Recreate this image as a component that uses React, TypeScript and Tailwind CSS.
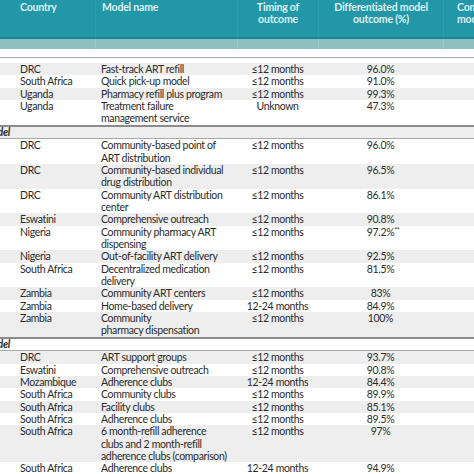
type Row = {
  country: string;
  model: string[];
  timing: string;
  outcome: string;
  note?: string;
  shaded?: boolean;
};

const COLS = "grid grid-cols-[95px_142px_81px_125px_1fr]";
const FONT = { fontFamily: "Lato, 'Liberation Sans', sans-serif" };

const section1: Row[] = [
  { country: "DRC", model: ["Fast-track ART refill"], timing: "≤12 months", outcome: "96.0%", shaded: true },
  { country: "South Africa", model: ["Quick pick-up model"], timing: "≤12 months", outcome: "91.0%" },
  { country: "Uganda", model: ["Pharmacy refill plus program"], timing: "≤12 months", outcome: "99.3%", shaded: true },
  { country: "Uganda", model: ["Treatment failure", "management service"], timing: "Unknown", outcome: "47.3%" },
];

const section2: Row[] = [
  { country: "DRC", model: ["Community-based point of", "ART distribution"], timing: "≤12 months", outcome: "96.0%" },
  { country: "DRC", model: ["Community-based individual", "drug distribution"], timing: "≤12 months", outcome: "96.5%", shaded: true },
  { country: "DRC", model: ["Community ART distribution", "center"], timing: "≤12 months", outcome: "86.1%" },
  { country: "Eswatini", model: ["Comprehensive outreach"], timing: "≤12 months", outcome: "90.8%", shaded: true },
  { country: "Nigeria", model: ["Community pharmacy ART", "dispensing"], timing: "≤12 months", outcome: "97.2%", note: "**" },
  { country: "Nigeria", model: ["Out-of-facility ART delivery"], timing: "≤12 months", outcome: "92.5%", shaded: true },
  { country: "South Africa", model: ["Decentralized medication", "delivery"], timing: "≤12 months", outcome: "81.5%" },
  { country: "Zambia", model: ["Community ART centers"], timing: "≤12 months", outcome: "83%", shaded: true },
  { country: "Zambia", model: ["Home-based delivery"], timing: "12-24 months", outcome: "84.9%" },
  { country: "Zambia", model: ["Community", "pharmacy dispensation"], timing: "≤12 months", outcome: "100%", shaded: true },
];

const section3: Row[] = [
  { country: "DRC", model: ["ART support groups"], timing: "≤12 months", outcome: "93.7%", shaded: true },
  { country: "Eswatini", model: ["Comprehensive outreach"], timing: "≤12 months", outcome: "90.8%" },
  { country: "Mozambique", model: ["Adherence clubs"], timing: "12-24 months", outcome: "84.4%", shaded: true },
  { country: "South Africa", model: ["Community clubs"], timing: "≤12 months", outcome: "89.9%" },
  { country: "South Africa", model: ["Facility clubs"], timing: "≤12 months", outcome: "85.1%", shaded: true },
  { country: "South Africa", model: ["Adherence clubs"], timing: "≤12 months", outcome: "89.5%" },
  {
    country: "South Africa",
    model: ["6 month-refill adherence", "clubs and 2 month-refill", "adherence clubs (comparison)"],
    timing: "≤12 months",
    outcome: "97%",
    shaded: true,
  },
  { country: "South Africa", model: ["Adherence clubs"], timing: "12-24 months", outcome: "94.9%" },
];

function DataRow({ row }: { row: Row }) {
  return (
    <div
      className={`${COLS} text-[10.5px] leading-[12.35px] tracking-[-0.35px] text-[#2b2b2b] ${
        row.shaded ? "bg-[#eeeeee]" : "bg-white"
      }`}
    >
      <div className="pl-[20px] whitespace-nowrap">{row.country}</div>
      <div className="pl-[6px] whitespace-nowrap">
        {row.model.map((line) => (
          <div key={line}>{line}</div>
        ))}
      </div>
      <div className="text-center whitespace-nowrap">{row.timing}</div>
      <div className="text-center whitespace-nowrap">
        {row.outcome}
        {row.note && <span className="absolute text-[7px] leading-[8px]">{row.note}</span>}
      </div>
      <div />
    </div>
  );
}

function SectionHeading({ label, shaded }: { label: string; shaded?: boolean }) {
  return (
    <div
      className={`flex h-[11.5px] items-center text-[10.5px] font-bold italic tracking-[-0.3px] text-[#2b2b2b] ${
        shaded ? "bg-[#eeeeee]" : "bg-white"
      }`}
    >
      <div className="flex w-[10px] justify-end whitespace-nowrap">{label}</div>
    </div>
  );
}

export default function App() {
  return (
    <div className="h-[474px] w-[474px] overflow-hidden bg-white" style={FONT}>
      {/* header band */}
      <div
        className={`${COLS} h-[37px] bg-[#2297a7] text-[10.5px] font-bold leading-[12px] tracking-[-0.2px] text-[#dff1f2]`}
      >
        <div className="pl-[20px] pt-[1px]">Country</div>
        <div className="border-l border-[#2aa1b0] pl-[6px] pt-[1px]">Model name</div>
        <div className="border-l border-[#2aa1b0] pt-[1px] text-center">
          <div>Timing of</div>
          <div>outcome</div>
        </div>
        <div className="border-l border-[#2aa1b0] pt-[1px] text-center">
          <div>Differentiated model</div>
          <div>outcome (%)</div>
        </div>
        <div className="border-l border-[#2aa1b0] pl-[13px] pt-[1px] whitespace-nowrap">
          <div>Comparison</div>
          <div>model outcome (%)</div>
        </div>
      </div>
      <div className="h-[2px] bg-[#1b8796]" />
      <div className={`${COLS} h-[10px] bg-[#8ec0c0]`}>
        <div />
        <div className="border-l border-[#9ccaca]" />
        <div className="border-l border-[#9ccaca]" />
        <div className="border-l border-[#9ccaca]" />
        <div className="border-l border-[#9ccaca]" />
      </div>

      <div className="h-[8px] bg-white" />
      <div className="h-px bg-[#a8a8a8]" />
      <div className="h-[5px] bg-white" />
      {section1.map((r, i) => (
        <DataRow key={`a${i}`} row={r} />
      ))}

      <div className="h-[2px] bg-[#8c8c8c]" />
      <SectionHeading label="Community-based model" shaded />
      <div className="h-px bg-[#a8a8a8]" />
      {section2.map((r, i) => (
        <DataRow key={`b${i}`} row={r} />
      ))}

      <div className="h-[2px] bg-[#8c8c8c]" />
      <SectionHeading label="Group model" />
      <div className="h-px bg-[#a8a8a8]" />
      {section3.map((r, i) => (
        <DataRow key={`c${i}`} row={r} />
      ))}
    </div>
  );
}
